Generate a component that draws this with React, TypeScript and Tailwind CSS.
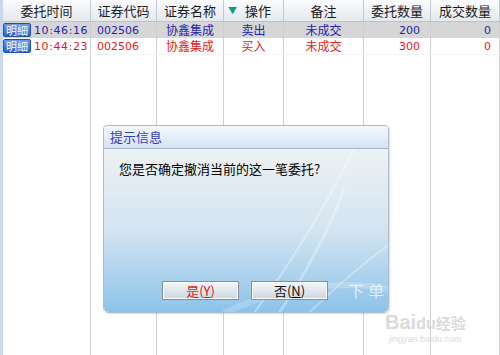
import React from "react";

const cols = "grid-cols-[88px_66px_67px_60px_80px_67px_69px]";
const cjk = { fontFamily: '"Noto Sans CJK SC", "Liberation Sans", sans-serif' };
const num = { fontFamily: '"DejaVu Sans", sans-serif', fontSize: 11 };

type Row = {
  time: string;
  code: string;
  name: string;
  op: string;
  note: string;
  qty: string;
  done: string;
  selected: boolean;
};

const rows: Row[] = [
  { time: "10:46:16", code: "002506", name: "协鑫集成", op: "卖出", note: "未成交", qty: "200", done: "0", selected: true },
  { time: "10:44:23", code: "002506", name: "协鑫集成", op: "买入", note: "未成交", qty: "300", done: "0", selected: false },
];

function HeaderCell({ children, className = "" }: { children: React.ReactNode; className?: string }) {
  return (
    <div
      className={`flex items-center justify-center border-r border-[#c3c9d1] text-[13px] text-[#1b1b1b] ${className}`}
    >
      {children}
    </div>
  );
}

function Cell({ children, className = "" }: { children?: React.ReactNode; className?: string }) {
  return (
    <div className={`flex items-center overflow-hidden border-r border-[#cfcfcf] text-[12px] leading-none ${className}`}>
      {children}
    </div>
  );
}

function Table() {
  return (
    <div className="flex h-full flex-col border-l-[3px] border-[#c9d8ec]">
      <div
        className={`grid ${cols} h-[22px] border-b border-[#b9c3cf] bg-gradient-to-b from-[#fbfcfd] to-[#e4e9ef]`}
        style={cjk}
      >
        <HeaderCell>委托时间</HeaderCell>
        <HeaderCell>证券代码</HeaderCell>
        <HeaderCell>证券名称</HeaderCell>
        <HeaderCell className="gap-2 pr-2">
          <span className="text-[9px] text-[#0a9a8e]">▼</span>
          <span>操作</span>
        </HeaderCell>
        <HeaderCell>备注</HeaderCell>
        <HeaderCell>委托数量</HeaderCell>
        <HeaderCell>成交数量</HeaderCell>
      </div>
      {rows.map((r) => {
        const color = r.selected ? "text-[#2424a8]" : "text-[#e01a1a]";
        return (
          <div
            key={r.time}
            className={`grid ${cols} h-[16px] ${r.selected ? "bg-[#d6d6d6]" : "bg-white"} ${color}`}
          >
            <Cell className="gap-[3px]">
              <span
                className="flex h-[14px] items-center rounded-[2px] border border-[#1f4fa8] bg-gradient-to-b from-[#6d9de6] to-[#2a62c8] px-[2px] text-[11px] leading-none text-white"
                style={cjk}
              >
                明細
              </span>
              <span className="tracking-[0.6px]" style={num}>
                {r.time}
              </span>
            </Cell>
            <Cell className="pl-[6px]">
              <span style={num}>{r.code}</span>
            </Cell>
            <Cell className="justify-center">
              <span style={cjk} className="text-[12px] leading-none">{r.name}</span>
            </Cell>
            <Cell className="justify-center">
              <span style={cjk} className="text-[12px] leading-none">{r.op}</span>
            </Cell>
            <Cell className="justify-center">
              <span style={cjk} className="text-[12px] leading-none">{r.note}</span>
            </Cell>
            <Cell className="justify-end pr-[10px]">
              <span style={num}>{r.qty}</span>
            </Cell>
            <Cell className="justify-end pr-[8px]">
              <span style={num}>{r.done}</span>
            </Cell>
          </div>
        );
      })}
      <div className={`grid ${cols} flex-1 border-t border-dotted border-[#eaeaea]`}>
        <Cell />
        <Cell />
        <Cell />
        <Cell />
        <Cell />
        <Cell />
        <Cell />
      </div>
    </div>
  );
}

function DialogButton({ label, hotkey, red }: { label: string; hotkey: string; red?: boolean }) {
  return (
    <button
      type="button"
      className={`flex h-[19px] w-[77px] items-center justify-center border border-[#7f8fa3] bg-gradient-to-b from-[#f6f8fa] to-[#cdd6df] text-[13px] leading-none shadow-[inset_0_0_0_1px_#ffffff] ${
        red ? "text-[#e0141a]" : "text-[#111111]"
      }`}
      style={{ fontFamily: '"Noto Sans CJK SC", serif' }}
    >
      {label}(<span className="underline">{hotkey}</span>)
    </button>
  );
}

function Dialog() {
  return (
    <div className="absolute left-[103px] top-[125px] flex h-[188px] w-[286px] flex-col overflow-hidden rounded-t-[4px] rounded-b-[6px] border border-[#a7bcd3] shadow-[1px_1px_2px_rgba(0,0,0,0.15)]">
      <div className="flex h-[23px] items-center border-b border-[#9fb4cd] bg-gradient-to-b from-[#f5f8fc] to-[#d6e3f4] pl-[6px]">
        <span className="text-[13px] text-[#2f3fbf]" style={cjk}>
          提示信息
        </span>
      </div>
      <div className="relative flex flex-1 flex-col bg-gradient-to-b from-[#eef1f4] via-[#d3e4f1] to-[#8cc3e9]">
        <svg className="absolute inset-0" width="286" height="164" viewBox="0 0 286 164">
          <path d="M150 164 C190 110 220 60 250 0" stroke="#ffffff" strokeOpacity="0.35" strokeWidth="2" fill="none" />
          <path d="M175 164 C205 120 225 80 240 40" stroke="#ffffff" strokeOpacity="0.3" strokeWidth="3" fill="none" />
          <path d="M205 164 C240 130 265 110 286 95" stroke="#ffffff" strokeOpacity="0.3" strokeWidth="2" fill="none" />
          <path d="M120 164 C170 140 230 130 286 140" stroke="#ffffff" strokeOpacity="0.2" strokeWidth="6" fill="none" />
        </svg>
        <p className="relative mt-[10px] pl-[15px] text-[13px] text-black" style={cjk}>
          您是否确定撤消当前的这一笔委托?
        </p>
        <div className="relative mb-[10px] mt-auto flex items-center gap-[12px] pl-[58px]">
          <DialogButton label="是" hotkey="Y" red />
          <DialogButton label="否" hotkey="N" />
          <span className="ml-[8px] text-[16px] tracking-[4px] text-white/70" style={cjk}>
            下单
          </span>
        </div>
      </div>
    </div>
  );
}

export default function App() {
  return (
    <div className="relative h-[355px] w-[500px] overflow-hidden bg-white">
      <Table />
      <Dialog />
      <div className="absolute left-[385px] top-[312px] flex flex-col items-center leading-none text-[#dadada]">
        <span
          className="text-[20px] font-bold"
          style={{ fontFamily: '"Liberation Sans", "Noto Sans CJK SC", sans-serif' }}
        >
          Bai<span className="text-[16px]">du</span>
          <span className="text-[15px]">经验</span>
        </span>
        <span className="mt-[3px] text-[9px]" style={{ fontFamily: '"Liberation Sans", sans-serif' }}>
          jingyan.baidu.com
        </span>
      </div>
    </div>
  );
}
